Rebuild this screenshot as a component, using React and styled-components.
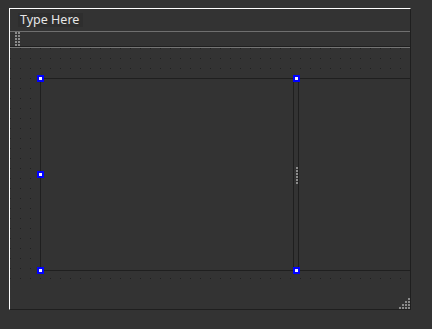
import React from "react";
import styled, { createGlobalStyle } from "styled-components";

const Global = createGlobalStyle`
  html, body { margin: 0; padding: 0; background: #333333; }
  body { width: 432px; height: 329px; overflow: hidden; }
  #root { padding: 8px 0 0 9px; }
`;

const Frame = styled.div`
  position: relative;
  box-sizing: border-box;
  width: 402px;
  height: 302px;
  border-top: 1px solid #ffffff;
  border-left: 1px solid #ffffff;
  border-right: 1px solid #1f1f1f;
  border-bottom: 1px solid #1f1f1f;
  background: #333333;
  overflow: hidden;
  display: flex;
  flex-direction: column;
`;

const TitleBar = styled.div`
  height: 23px;
  flex: none;
  border-bottom: 1px solid #6f6f6f;
  display: flex;
  align-items: flex-start;
  padding: 4px 0 0 8px;
  box-sizing: border-box;
`;

const TitleInput = styled.div`
  height: 14px;
  width: 65px;
  background: #2e2e2e;
  color: #e6e6e6;
  font-family: "Noto Sans", "Open Sans", sans-serif;
  font-size: 12.5px;
  line-height: 14px;
  padding-left: 2px;
  box-sizing: border-box;
  white-space: nowrap;
`;

const ToolBar = styled.div`
  height: 16px;
  flex: none;
  box-sizing: border-box;
  border-bottom: 1px solid #757575;
  box-shadow: inset 0 -1px 0 #1f1f1f;
  padding-left: 5px;
  display: flex;
`;

const Grip = styled.div`
  width: 5px;
  height: 15px;
  background-image: conic-gradient(from 270deg at 2px 2px, #8c8c8c 90deg, transparent 0);
  background-size: 3px 3px;
  background-position: 0 0;
`;

const Canvas = styled.div`
  flex: 1;
  display: flex;
  flex-direction: column;
`;

const DotGrid = styled.div`
  height: 240px;
  flex: none;
  padding: 30px 0 0 30px;
  box-sizing: border-box;
  background-image: conic-gradient(from 270deg at 1px 1px, #202020 90deg, transparent 0);
  background-size: 10px 10px;
  background-position: 0 0;
`;

const Split = styled.div`
  position: relative;
  display: flex;
  height: 193px;
  width: 420px;
  box-sizing: border-box;
  border-top: 1px solid #1f1f1f;
  border-bottom: 1px solid #1f1f1f;
  border-left: 1px solid #1f1f1f;
  background: #333333;
`;

const Pane = styled.div`
  flex: ${(p) => (p.$grow ? 1 : "none")};
  width: ${(p) => (p.$grow ? "auto" : "253px")};
  box-sizing: border-box;
  ${(p) => (p.$grow ? "border-left: 1px solid #1f1f1f;" : "border-right: 1px solid #1f1f1f;")}
  background: #333333;
`;

const Splitter = styled.div`
  width: 4px;
  flex: none;
  display: flex;
  align-items: center;
  padding-left: 2px;
  box-sizing: border-box;
`;

const SplitGrip = styled.div`
  width: 2px;
  height: 17px;
  margin-top: 1px;
  background-image: linear-gradient(#8c8c8c 2px, transparent 2px);
  background-size: 2px 3px;
`;

const Handle = styled.div`
  position: absolute;
  width: 7px;
  height: 7px;
  box-sizing: border-box;
  border: 2px solid #0000ff;
  background: #f2f2ff;
  left: ${(p) => p.$x}px;
  top: ${(p) => p.$y}px;
`;

const Resize = styled.svg`
  position: absolute;
  right: 0px;
  bottom: 0px;
`;

const handles = [
  [-4, -4],
  [252, -4],
  [-4, 92],
  [-4, 188],
  [252, 188],
];

export default function App() {
  const squares = [];
  for (let r = 0; r < 4; r++) {
    for (let c = 3 - r; c < 4; c++) {
      squares.push(<rect key={`${r}-${c}`} x={c * 3} y={r * 3} width="2" height="2" fill="#8a8a8a" />);
    }
  }
  return (
    <>
      <Global />
      <Frame>
        <TitleBar>
          <TitleInput>Type Here</TitleInput>
        </TitleBar>
        <ToolBar>
          <Grip />
        </ToolBar>
        <Canvas>
          <DotGrid>
            <Split>
              <Pane />
              <Splitter>
                <SplitGrip />
              </Splitter>
              <Pane $grow />
              {handles.map(([x, y], i) => (
                <Handle key={i} $x={x} $y={y} />
              ))}
            </Split>
          </DotGrid>
        </Canvas>
        <Resize width="11" height="11" viewBox="0 0 11 11">
          {squares}
        </Resize>
      </Frame>
    </>
  );
}
